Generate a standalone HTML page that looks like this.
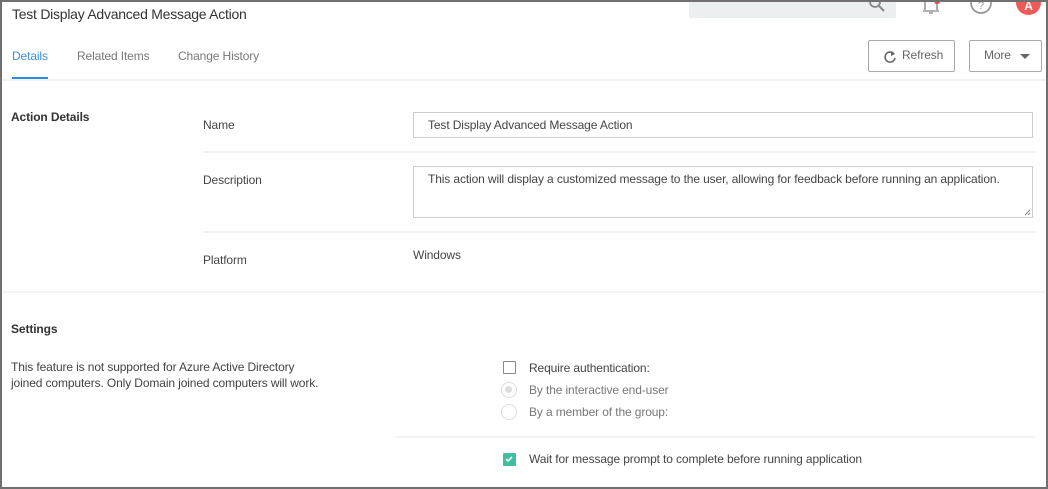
<!DOCTYPE html>
<html><head><style>
*{margin:0;padding:0;box-sizing:border-box}
body{width:1048px;height:489px;overflow:hidden;background:#fff;font-family:"Liberation Sans",Arial,sans-serif;color:#444;font-size:12px;position:relative;letter-spacing:-0.12px}
.frame{position:absolute;left:0;top:0;width:1048px;height:489px;border:2px solid #707070;z-index:10;pointer-events:none}
.a{position:absolute;white-space:nowrap}
.line{position:absolute;height:2px;background:#f3f3f3}
.box{position:absolute;border:1px solid #ccc;background:#fff}
.btn{position:absolute;border:1px solid #aaa;border-radius:2px;color:#666;font-size:12px;background:#fff}
</style></head><body>
<div class="frame"></div>
<div class="a" style="left:12px;top:6px;font-size:14px;color:#333;letter-spacing:-0.25px">Test Display Advanced Message Action</div>
<div style="position:absolute;left:689px;top:0;width:207px;height:18px;background:#eceff0"></div>
<svg class="a" style="left:866px;top:0" width="22" height="14"><circle cx="9" cy="2" r="5" fill="none" stroke="#888" stroke-width="1.8"/><line x1="13" y1="6" x2="18" y2="11" stroke="#888" stroke-width="2"/></svg>
<svg class="a" style="left:920px;top:0" width="24" height="16"><path d="M5 10 L5 2 M17 10 L17 2 M3 11 H19 M9 13 H13" stroke="#999" stroke-width="1.6" fill="none"/><circle cx="17" cy="1" r="3" fill="#e44"/></svg>
<svg class="a" style="left:968px;top:0" width="26" height="16"><circle cx="13" cy="3" r="10" fill="none" stroke="#999" stroke-width="1.8"/><text x="10" y="9" font-size="11" fill="#999" font-family="Liberation Sans">?</text></svg>
<div class="a" style="left:1016px;top:-10px;width:25px;height:25px;border-radius:50%;background:#ef5a57;color:#fff;font-size:12px;text-align:center;line-height:33px;font-weight:bold">A</div>

<div class="a" style="left:12px;top:49px;color:#3e8fd8">Details</div>
<div style="position:absolute;left:12px;top:77px;width:36px;height:2px;background:#2a8be0"></div>
<div class="a" style="left:77px;top:49px;color:#777">Related Items</div>
<div class="a" style="left:178px;top:49px;color:#777">Change History</div>
<div class="line" style="left:2px;top:79px;width:1044px"></div>

<div class="btn" style="left:868px;top:40px;width:87px;height:32px"><svg style="position:absolute;left:14px;top:9px" width="14" height="14"><path d="M11 4 A5 5 0 1 0 12 8" fill="none" stroke="#666" stroke-width="1.6"/><path d="M8 1 L12 4 L8 6Z" fill="#666"/></svg><span style="position:absolute;left:33px;top:7px">Refresh</span></div>
<div class="btn" style="left:969px;top:40px;width:73px;height:32px"><span style="position:absolute;left:14px;top:7px">More</span><svg style="position:absolute;left:50px;top:13px" width="10" height="6"><path d="M0 0H10L5 5Z" fill="#666"/></svg></div>

<div class="a" style="left:11px;top:110px;font-weight:bold;color:#333">Action Details</div>
<div class="a" style="left:203px;top:118px">Name</div>
<div class="box" style="left:413px;top:112px;width:620px;height:26px"><span style="position:absolute;left:14px;top:5px;color:#444">Test Display Advanced Message Action</span></div>
<div class="line" style="left:203px;top:151px;width:832px"></div>
<div class="a" style="left:203px;top:173px">Description</div>
<div class="box" style="left:413px;top:166px;width:620px;height:52px"><span style="position:absolute;left:14px;top:5px;color:#444">This action will display a customized message to the user, allowing for feedback before running an application.</span><svg style="position:absolute;right:1px;bottom:1px" width="7" height="7"><path d="M1 6L6 1M4 6L6 4" stroke="#888"/></svg></div>
<div class="line" style="left:203px;top:231px;width:832px"></div>
<div class="a" style="left:203px;top:253px">Platform</div>
<div class="a" style="left:413px;top:248px">Windows</div>
<div class="line" style="left:2px;top:291px;width:1044px"></div>

<div class="a" style="left:11px;top:322px;font-weight:bold;color:#333">Settings</div>
<div class="a" style="left:11px;top:359px;line-height:16px">This feature is not supported for Azure Active Directory<br>joined computers. Only Domain joined computers will work.</div>

<div style="position:absolute;left:503px;top:361px;width:13px;height:13px;border:1.5px solid #888;border-radius:1px"></div>
<div class="a" style="left:529px;top:361px;color:#444">Require authentication:</div>
<div style="position:absolute;left:501px;top:382px;width:16px;height:16px;border:1.5px solid #ddd;border-radius:50%;background:#fff"><div style="position:absolute;left:3px;top:3px;width:7px;height:7px;border-radius:50%;background:#ddd"></div></div>
<div class="a" style="left:529px;top:383px;color:#777">By the interactive end-user</div>
<div style="position:absolute;left:501px;top:404px;width:16px;height:16px;border:1.5px solid #ddd;border-radius:50%"></div>
<div class="a" style="left:529px;top:405px;color:#777">By a member of the group:</div>
<div class="line" style="left:395px;top:436px;width:640px"></div>
<div style="position:absolute;left:503px;top:453px;width:13px;height:13px;background:#3fbf9f;border-radius:1px"><svg style="position:absolute;left:1px;top:1px" width="10" height="10"><path d="M2 5L4 7L8 3" stroke="#fff" stroke-width="1.6" fill="none"/></svg></div>
<div class="a" style="left:529px;top:452px;color:#444">Wait for message prompt to complete before running application</div>
</body></html>
